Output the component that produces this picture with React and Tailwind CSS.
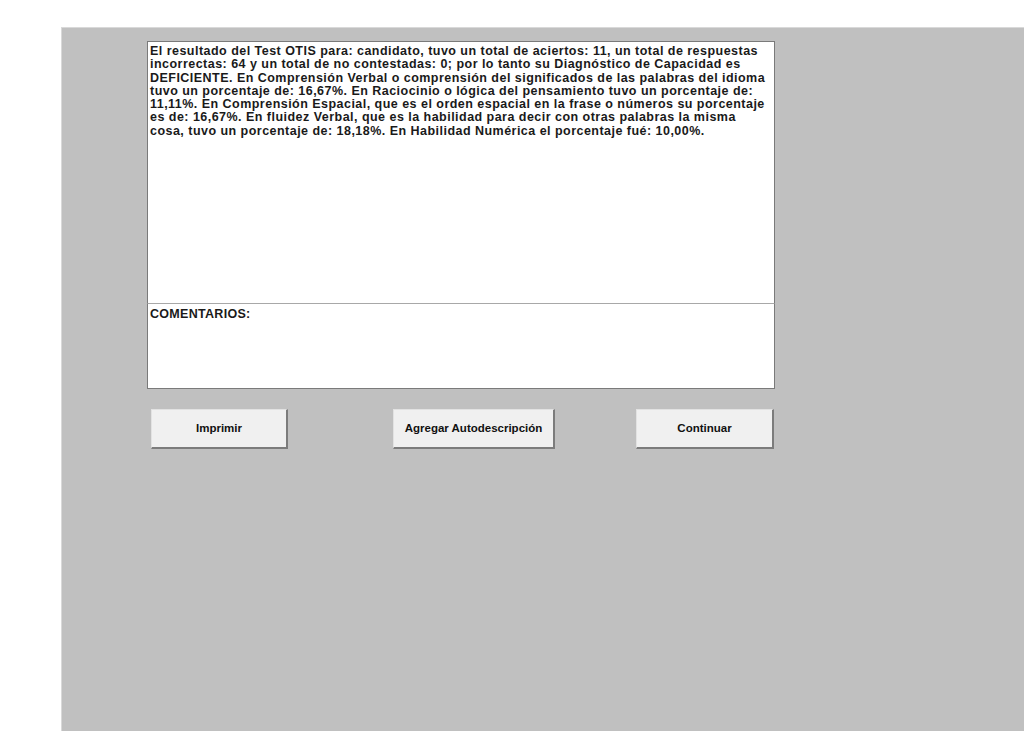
import React from "react";

const lines = [
  "El resultado del Test OTIS para: candidato, tuvo un total de aciertos: 11, un total de respuestas",
  "incorrectas: 64 y un total de no contestadas: 0; por lo tanto su Diagnóstico de Capacidad es",
  "DEFICIENTE. En Comprensión Verbal o comprensión del significados de las palabras del idioma",
  "tuvo un porcentaje de: 16,67%. En Raciocinio o lógica del pensamiento tuvo un porcentaje de:",
  "11,11%. En Comprensión Espacial, que es el orden espacial en la frase o números su porcentaje",
  "es de: 16,67%. En fluidez Verbal, que es la habilidad para decir con otras palabras la misma",
  "cosa, tuvo un porcentaje de: 18,18%. En Habilidad Numérica el porcentaje fué: 10,00%.",
];

function Btn({ children, className }) {
  return (
    <div
      className={
        "h-[40px] flex items-center justify-center bg-[#f0f0f0] border-t border-l border-t-[#e2e2e2] border-l-[#e2e2e2] border-r-2 border-b-2 border-r-[#7c7c7c] border-b-[#7c7c7c] text-[11.5px] font-bold text-[#111] " +
        className
      }
      style={{ fontFamily: '"Liberation Sans", Arial, sans-serif' }}
    >
      {children}
    </div>
  );
}

export default function App() {
  return (
    <div
      className="h-[731px] overflow-hidden bg-white pl-[61px] pt-[27px] flex"
      style={{ fontFamily: '"Liberation Sans", Arial, sans-serif' }}
    >
      <div className="flex-1 bg-[#c0c0c0] border-l border-t border-[#d9d9d9] pl-[85px] pt-[13px]">
        <div className="w-[628px]">
          <div className="h-[263px] bg-white border-t border-x border-[#7a7a7a] border-b border-b-[#a8a8a8] pl-[2px] pt-[3px] text-[12.5px] leading-[13.3px] tracking-[0.47px] font-bold text-[#1a1a1a]">
            {lines.map((l, i) => (
              <div key={i} className="whitespace-nowrap">
                {l}
              </div>
            ))}
          </div>
          <div className="h-[85px] bg-white border-x border-b border-[#7a7a7a] pl-[2px] pt-[4px] text-[12.5px] leading-[13.3px] tracking-[0.3px] font-bold text-[#1a1a1a]">
            COMENTARIOS:
          </div>
          <div className="flex mt-[20px]">
            <Btn className="ml-[4px] w-[137px]">Imprimir</Btn>
            <Btn className="ml-[105px] w-[162px]">Agregar Autodescripción</Btn>
            <Btn className="ml-[81px] w-[138px]">Continuar</Btn>
          </div>
        </div>
      </div>
    </div>
  );
}
